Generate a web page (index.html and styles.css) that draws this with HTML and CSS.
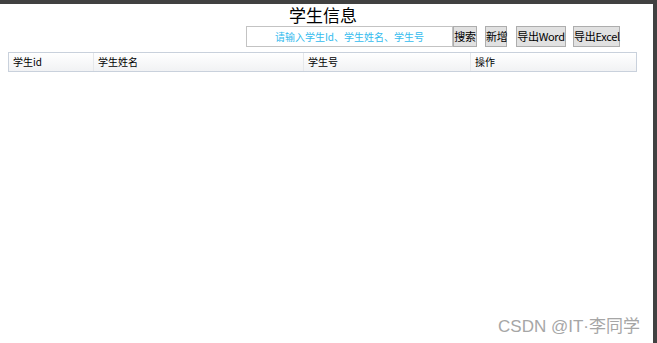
FILE: index.html
```html
<!DOCTYPE html>
<html lang="zh-CN">
<head>
    <meta charset="UTF-8">
    <title>学生信息</title>
    <link rel="stylesheet" href="styles.css">
</head>
<body>
    <div class="window">
        <h2 class="title">学生信息</h2>
        <div class="toolbar">
            <input type="text" class="search" placeholder="请输入学生Id、学生姓名、学生号">
            <button class="btn btn-search">搜索</button>
            <button class="btn btn-add">新增</button>
            <button class="btn btn-word">导出Word</button>
            <button class="btn btn-excel">导出Excel</button>
        </div>
        <div class="grid-header">
            <div class="col col-id">学生id</div>
            <div class="col col-name">学生姓名</div>
            <div class="col col-no">学生号</div>
            <div class="col col-op">操作</div>
        </div>
        <div class="watermark">CSDN @IT·李同学</div>
    </div>
</body>
</html>
```

FILE: styles.css
```css
body {
    margin: 0;
    background: #fff;
    font-family: "Noto Sans CJK SC", "Noto Sans", sans-serif;
}
.window {
    position: relative;
    height: 343px;
    box-sizing: border-box;
    border-top: 4px solid #414141;
    border-right: 4px solid #414141;
    width: 657px;
}
.title {
    margin: 0;
    padding-left: 289px;
    height: 22px;
    font-size: 17px;
    font-weight: normal;
    line-height: 22px;
    color: #000;
}
.toolbar {
    display: flex;
    align-items: stretch;
    height: 21px;
    padding-left: 246px;
}
.search {
    width: 207px;
    height: 21px;
    box-sizing: border-box;
    border: 1px solid #c3c3c3;
    padding: 0;
    text-align: center;
    font-family: inherit;
    font-size: 10px;
    outline: none;
}
.search::placeholder {
    color: #33bbee;
}
.btn {
    height: 21px;
    box-sizing: border-box;
    padding: 0;
    background: #e1e1e1;
    border: 1px solid #adadad;
    font-family: inherit;
    font-size: 11px;
    color: #000;
    line-height: 17px;
    white-space: nowrap;
    text-align: center;
    letter-spacing: -0.3px;
}
.btn-search {
    width: 24px;
}
.btn-add {
    width: 22px;
    margin-left: 8px;
}
.btn-word {
    width: 50px;
    margin-left: 9px;
}
.btn-excel {
    width: 47px;
    margin-left: 7px;
}
.grid-header {
    display: flex;
    margin: 5px 0 0 8px;
    width: 629px;
    height: 20px;
    box-sizing: border-box;
    border: 1px solid #c9d1dc;
    background: linear-gradient(#ffffff, #f1f2f4);
}
.col {
    box-sizing: border-box;
    padding-left: 4px;
    font-size: 10px;
    line-height: 18px;
    color: #000;
    border-right: 1px solid #e6e8eb;
}
.col-id { width: 85px; }
.col-name { width: 210px; }
.col-no { width: 167px; }
.col-op { flex: 1; border-right: none; }
.watermark {
    position: absolute;
    right: 13px;
    bottom: 6px;
    font-family: "Liberation Sans", "Noto Sans CJK SC", sans-serif;
    font-size: 17px;
    color: #a6a6a6;
}
```
